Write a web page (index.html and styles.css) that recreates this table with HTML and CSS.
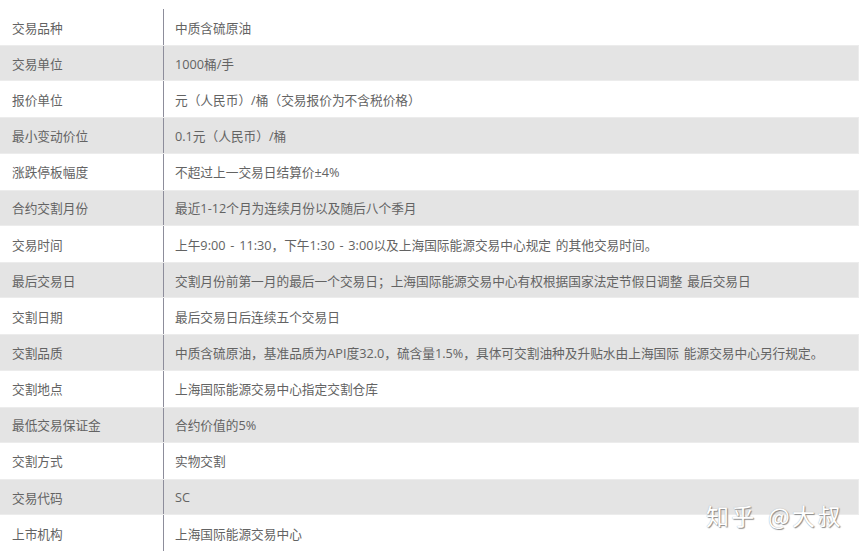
FILE: index.html
```html
<!DOCTYPE html>
<html lang="zh-CN">
<head>
<meta charset="utf-8">
<link rel="stylesheet" href="styles.css">
</head>
<body>
<div class="page">
  <div class="table">
    <div class="row"><div class="k">交易品种</div><div class="v">中质含硫原油</div></div>
    <div class="row alt"><div class="k">交易单位</div><div class="v">1000桶/手</div></div>
    <div class="row"><div class="k">报价单位</div><div class="v">元（人民币）/桶（交易报价为不含税价格）</div></div>
    <div class="row alt"><div class="k">最小变动价位</div><div class="v">0.1元（人民币）/桶</div></div>
    <div class="row"><div class="k">涨跌停板幅度</div><div class="v">不超过上一交易日结算价±4%</div></div>
    <div class="row alt"><div class="k">合约交割月份</div><div class="v">最近1-12个月为连续月份以及随后八个季月</div></div>
    <div class="row"><div class="k">交易时间</div><div class="v">上午9:00 - 11:30，下午1:30 - 3:00以及上海国际能源交易中心规定 的其他交易时间。</div></div>
    <div class="row alt"><div class="k">最后交易日</div><div class="v">交割月份前第一月的最后一个交易日；上海国际能源交易中心有权根据国家法定节假日调整 最后交易日</div></div>
    <div class="row"><div class="k">交割日期</div><div class="v">最后交易日后连续五个交易日</div></div>
    <div class="row alt"><div class="k">交割品质</div><div class="v">中质含硫原油，基准品质为API度32.0，硫含量1.5%，具体可交割油种及升贴水由上海国际 能源交易中心另行规定。</div></div>
    <div class="row"><div class="k">交割地点</div><div class="v">上海国际能源交易中心指定交割仓库</div></div>
    <div class="row alt"><div class="k">最低交易保证金</div><div class="v">合约价值的5%</div></div>
    <div class="row"><div class="k">交割方式</div><div class="v">实物交割</div></div>
    <div class="row alt"><div class="k">交易代码</div><div class="v">SC</div></div>
    <div class="row"><div class="k">上市机构</div><div class="v">上海国际能源交易中心</div></div>
  </div>
  <div class="watermark">知乎 @大叔</div>
</div>
</body>
</html>
```
FILE: styles.css
```css
html, body {
  margin: 0;
  padding: 0;
  background: #ffffff;
}
.page {
  position: relative;
  width: 865px;
  height: 553px;
  overflow: hidden;
  padding-top: 9px;
  box-sizing: border-box;
  font-family: "Open Sans", "Noto Sans CJK SC", sans-serif;
  font-size: 12.7px;
  word-spacing: 1.5px;
  color: #636363;
}
.table {
  width: 859px;
  display: flex;
  flex-direction: column;
}
.row {
  display: grid;
  grid-template-columns: 163px 1px 1fr;
  height: 36.17px;
  align-items: center;
  box-sizing: border-box;
}
.row::before {
  content: "";
  grid-column: 2;
  grid-row: 1;
  align-self: stretch;
  background: #8d8d9b;
}
.row.alt {
  background: #e4e4e4;
  border-top: 1px solid #ececec;
  border-bottom: 1px solid #ececec;
  border-right: 1px solid #ececec;
}
.k {
  grid-column: 1;
  grid-row: 1;
  padding-left: 12px;
  white-space: nowrap;
}
.v {
  grid-column: 3;
  grid-row: 1;
  padding-left: 11px;
  white-space: nowrap;
}
.watermark {
  position: absolute;
  left: 706px;
  top: 498px;
  font-family: "Noto Sans CJK SC", sans-serif;
  font-size: 23px;
  color: #ffffff;
  letter-spacing: 2.3px;
  word-spacing: 4px;
  text-shadow: 1px 1px 1px #8a8a8a, 0 0 1px #a0a0a0;
}
```
